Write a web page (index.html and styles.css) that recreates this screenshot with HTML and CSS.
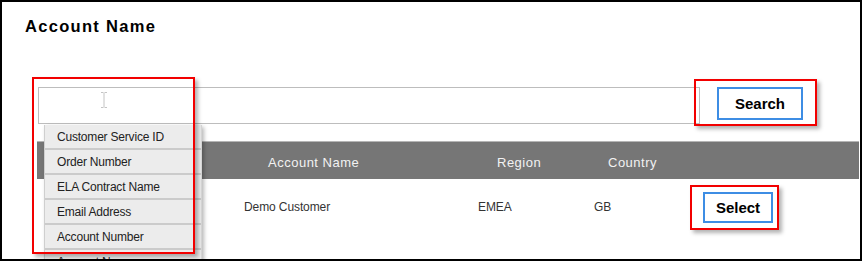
FILE: index.html
```html
<!DOCTYPE html>
<html>
<head>
<meta charset="utf-8">
<link rel="stylesheet" href="styles.css">
</head>
<body>
<div class="frame">
  <h1 class="title">Account Name</h1>
  <div class="search-row">
    <div class="search-input">
      <svg class="caret" width="8" height="16" viewBox="0 0 8 16"><path d="M1 0.5h2.5M4.5 0.5h2.5M4 1v14M1 15.5h2.5M4.5 15.5h2.5" stroke="#c4c4c4" stroke-width="1" fill="none"/></svg>
    </div>
    <button class="btn btn-search">Search</button>
  </div>
  <div class="table">
    <div class="thead">
      <div class="cell"></div>
      <div class="cell h-name">Account Name</div>
      <div class="cell h-region">Region</div>
      <div class="cell h-country">Country</div>
      <div class="cell"></div>
    </div>
    <div class="trow">
      <div class="cell"></div>
      <div class="cell">Demo Customer</div>
      <div class="cell">EMEA</div>
      <div class="cell">GB</div>
      <div class="cell"><button class="btn btn-select">Select</button></div>
    </div>
  </div>
  <ul class="dropdown">
    <li>Customer Service ID</li>
    <li>Order Number</li>
    <li>ELA Contract Name</li>
    <li>Email Address</li>
    <li>Account Number</li>
    <li>Account Name</li>
  </ul>
  <div class="annot annot-field"></div>
  <div class="annot annot-search"></div>
  <div class="annot annot-select"></div>
</div>
</body>
</html>
```
FILE: styles.css
```css
html, body {
  margin: 0;
  padding: 0;
  background: #fff;
}
.frame {
  position: relative;
  box-sizing: border-box;
  width: 862px;
  height: 261px;
  border: 2px solid #000;
  overflow: hidden;
  font-family: "Liberation Sans", Arial, sans-serif;
  background: #fff;
}
.title {
  margin: 14px 0 0 23px;
  font-size: 16.5px;
  line-height: 21px;
  font-weight: bold;
  letter-spacing: 1.3px;
  color: #000;
}
.search-row {
  display: flex;
  align-items: flex-start;
  gap: 17px;
  margin: 50px 0 0 36px;
}
.search-input {
  box-sizing: border-box;
  width: 662px;
  height: 37px;
  border: 1px solid #bdbdbd;
  background: #fff;
  padding: 4px 0 0 61px;
}
.caret {
  display: block;
}
.btn {
  box-sizing: border-box;
  background: #fff;
  border: 2px solid #3d8de4;
  font-family: "Liberation Sans", Arial, sans-serif;
  font-weight: bold;
  font-size: 15px;
  color: #000;
  padding: 0;
  margin: 0;
}
.btn-search {
  width: 86px;
  height: 33px;
}
.btn-select {
  width: 70px;
  height: 31px;
}
.table {
  margin: 17px 0 0 35px;
  width: 822px;
}
.thead, .trow {
  display: grid;
  grid-template-columns: 207px 234px 116px 109px 1fr;
}
.thead {
  box-sizing: border-box;
  height: 38px;
  background: #767676;
  border-top: 1px solid #b5b5b5;
  color: #f2f2f2;
  font-size: 13px;
  letter-spacing: 0.5px;
  align-items: center;
  padding-top: 4px;
}
.h-name { padding-left: 24px; }
.h-region { padding-left: 19px; }
.h-country { padding-left: 14px; }
.trow {
  height: 56px;
  align-items: center;
  font-size: 12px;
  color: #333;
  letter-spacing: -0.1px;
}
.trow .cell {
  display: flex;
  align-items: center;
}
.dropdown {
  position: absolute;
  left: 42px;
  top: 123px;
  width: 158px;
  margin: 0;
  padding: 0;
  list-style: none;
  background: #ececec;
  border-left: 1px solid #cfcfcf;
  border-right: 1px solid #d6d6d6;
  box-shadow: 2px 2px 4px rgba(0, 0, 0, 0.28);
  box-sizing: border-box;
}
.dropdown li {
  box-sizing: border-box;
  height: 25px;
  line-height: 22px;
  padding: 1px 0 0 12px;
  border-bottom: 2px solid #cbcbcb;
  font-size: 12px;
  letter-spacing: -0.2px;
  color: #222;
}
.annot {
  position: absolute;
  box-sizing: border-box;
  border: 2px solid #f20000;
  box-shadow: 3px 3px 4px rgba(0, 0, 0, 0.3);
}
.annot-field {
  left: 30px;
  top: 75px;
  width: 163px;
  height: 177px;
}
.annot-search {
  left: 692px;
  top: 77px;
  width: 123px;
  height: 47px;
}
.annot-select {
  left: 688px;
  top: 183px;
  width: 89px;
  height: 45px;
}
```
